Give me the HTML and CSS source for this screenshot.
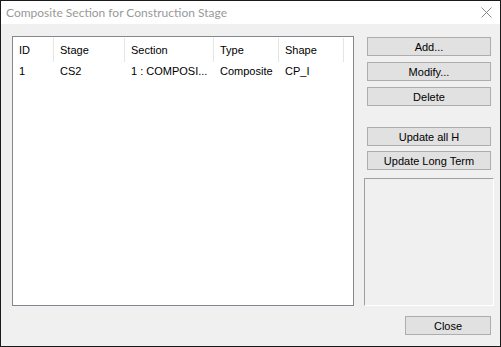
FILE: index.html
```html
<!DOCTYPE html>
<html lang="en">
<head>
    <meta charset="UTF-8">
    <title>Composite Section for Construction Stage</title>
    <link rel="stylesheet" href="styles.css">
</head>
<body>
    <div class="window">
        <div class="titlebar">
            <span class="title">Composite Section for Construction Stage</span>
            <svg class="close-x" width="11" height="11" viewBox="0 0 11 11">
                <path d="M0.5 0.5 L10.5 10.5 M10.5 0.5 L0.5 10.5" stroke="#8a8a8a" stroke-width="1"/>
            </svg>
        </div>

        <div class="content">
            <div class="main">
                <div class="list">
                    <div class="row header">
                        <div class="cell c-id">ID</div>
                        <div class="cell c-stage">Stage</div>
                        <div class="cell c-section">Section</div>
                        <div class="cell c-type">Type</div>
                        <div class="cell c-shape">Shape</div>
                    </div>
                    <div class="row">
                        <div class="cell c-id">1</div>
                        <div class="cell c-stage">CS2</div>
                        <div class="cell c-section">1 : COMPOSI...</div>
                        <div class="cell c-type">Composite</div>
                        <div class="cell c-shape">CP_I</div>
                    </div>
                </div>

                <div class="side">
                    <div class="buttons">
                        <button>Add...</button>
                        <button>Modify...</button>
                        <button>Delete</button>
                        <button class="spaced">Update all H</button>
                        <button class="tight">Update Long Term</button>
                    </div>
                    <div class="panel"></div>
                </div>
            </div>

            <div class="footer">
                <button class="close-btn">Close</button>
            </div>
        </div>
    </div>
</body>
</html>
```

FILE: styles.css
```css
* {
    box-sizing: border-box;
}
body {
    margin: 0;
    background-color: #f0f0f0;
    font-family: "Liberation Sans", Arial, sans-serif;
    font-size: 11px;
    color: #000;
}
.window {
    width: 501px;
    height: 347px;
    border: 1px solid #1a1a1a;
    background-color: #f0f0f0;
    display: flex;
    flex-direction: column;
}
.titlebar {
    height: 23px;
    background-color: #fff;
    display: flex;
    align-items: center;
    justify-content: space-between;
    padding: 0 8px 0 5px;
}
.title {
    font-family: Lato, sans-serif;
    font-size: 12px;
    color: #999;
    margin-top: -1px;
}
.close-x {
    margin-top: -1px;
}
.content {
    flex: 1;
    padding: 12px 0 0 11px;
    display: flex;
    flex-direction: column;
}
.main {
    display: flex;
}
.list {
    width: 342px;
    height: 270px;
    background-color: #fff;
    border: 1px solid #828790;
}
.row {
    display: flex;
    height: 17px;
    align-items: center;
}
.row.header {
    height: 25px;
}
.cell {
    padding-left: 6px;
    white-space: nowrap;
    overflow: hidden;
}
.header .cell {
    height: 24px;
    margin-top: 1px;
    line-height: 24px;
    border-right: 1px solid #e5e5e5;
}
.c-id { width: 41px; }
.c-stage { width: 71px; }
.c-section { width: 89px; }
.c-type { width: 65px; }
.c-shape { width: 65px; }
.side {
    margin-left: 10px;
    width: 130px;
    display: flex;
    flex-direction: column;
}
.buttons {
    display: flex;
    flex-direction: column;
    padding: 1px 0 0 3px;
}
button {
    width: 124px;
    height: 19px;
    margin-bottom: 6px;
    padding: 0;
    background-color: #e1e1e1;
    border: 1px solid #adadad;
    font-family: "Liberation Sans", Arial, sans-serif;
    font-size: 11px;
    color: #000;
}
.buttons .spaced {
    margin-top: 15px;
    margin-bottom: 5px;
}
.buttons .tight {
    margin-bottom: 0;
}
.panel {
    margin-top: 8px;
    height: 128px;
    border-top: 1px solid #a0a0a0;
    border-left: 1px solid #a0a0a0;
    border-right: 1px solid #fff;
    border-bottom: 1px solid #fff;
}
.footer {
    display: flex;
    justify-content: flex-end;
    padding: 10px 9px 0 0;
}
.close-btn {
    width: 86px;
    height: 19px;
    margin: 0;
}
```
